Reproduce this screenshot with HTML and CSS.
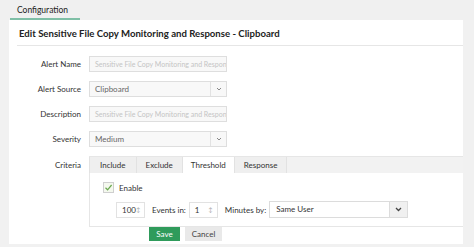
FILE: index.html
```html
<!DOCTYPE html>
<html>
    <head>
        <title>Configuration</title>
        <link rel="stylesheet" href="styles.css">
    </head>
    <body>
        <div class="topTabs">
            <div class="topTab active">Configuration</div>
        </div>

        <div class="card">
            <div class="title">Edit Sensitive File Copy Monitoring and Response - Clipboard</div>

            <div class="form">
                <div class="row">
                    <div class="label">Alert Name</div>
                    <div class="field disabled">Sensitive File Copy Monitoring and Respon</div>
                </div>
                <div class="row">
                    <div class="label">Alert Source</div>
                    <div class="field select">
                        <span class="value">Clipboard</span>
                        <span class="arrow">
                            <svg width="6" height="4" viewBox="0 0 6 4"><path d="M1 1 L3 3 L5 1" fill="none" stroke="#888" stroke-width="1"/></svg>
                        </span>
                    </div>
                </div>
                <div class="row">
                    <div class="label">Description</div>
                    <div class="field disabled">Sensitive File Copy Monitoring and Respon</div>
                </div>
                <div class="row">
                    <div class="label">Severity</div>
                    <div class="field select">
                        <span class="value">Medium</span>
                        <span class="arrow">
                            <svg width="6" height="4" viewBox="0 0 6 4"><path d="M1 1 L3 3 L5 1" fill="none" stroke="#888" stroke-width="1"/></svg>
                        </span>
                    </div>
                </div>
                <div class="row criteria">
                    <div class="label">Criteria</div>
                    <div class="tabArea">
                        <div class="tabs">
                            <div class="tab">Include</div>
                            <div class="tab">Exclude</div>
                            <div class="tab active">Threshold</div>
                            <div class="tab">Response</div>
                        </div>
                        <div class="panel">
                            <div class="enable">
                                <span class="check">
                                    <svg width="9" height="9" viewBox="0 0 9 9"><path d="M1.5 4.8 L3.6 6.8 L7.6 2" fill="none" stroke="#6aa84f" stroke-width="1.2"/></svg>
                                </span>
                                Enable
                            </div>
                            <div class="threshold">
                                <div class="spin"><span>100</span><span class="spinArrows">&#x2195;</span></div>
                                <span class="text">Events in:</span>
                                <div class="spin"><span>1</span><span class="spinArrows">&#x2195;</span></div>
                                <span class="text">Minutes by:</span>
                                <div class="userSelect">
                                    <span class="value">Same User</span>
                                    <span class="arrowBox">
                                        <svg width="7" height="5" viewBox="0 0 7 5"><path d="M1 1 L3.5 3.5 L6 1" fill="none" stroke="#444" stroke-width="1.3"/></svg>
                                    </span>
                                </div>
                            </div>
                        </div>
                    </div>
                </div>
            </div>

            <div class="buttons">
                <div class="btn save">Save</div>
                <div class="btn cancel">Cancel</div>
            </div>
        </div>
    </body>
</html>
```

FILE: styles.css
```css
body {
    margin: 0;
    background-color: #f1f1f1;
    font-family: Lato, "Open Sans", sans-serif;
    font-size: 8px;
    color: #333;
}
.topTabs {
    height: 20px;
    display: flex;
    padding-left: 10px;
    background-color: #f0f0f0;
}
.topTab {
    width: 70px;
    box-sizing: border-box;
    padding: 5px 0 0 7px;
    font-size: 8.5px;
    color: #222;
}
.topTab.active {
    border-bottom: 2px solid #7fbfa6;
}
.card {
    margin: 0 11px 3px 9px;
    background-color: white;
    padding: 0 0 3px 8px;
}
.title {
    font-weight: bold;
    font-size: 9.6px;
    color: #222;
    padding: 8px 0 6px 2px;
    border-bottom: 1px solid #e6e6e6;
}
.form {
    padding-top: 10px;
    margin-left: -8px;
}
.row {
    display: flex;
    align-items: center;
    margin-bottom: 9px;
}
.label {
    width: 72px;
    margin-right: 8px;
    text-align: right;
    color: #333;
}
.field {
    width: 138px;
    height: 16px;
    box-sizing: border-box;
    border: 1px solid #dedede;
    background-color: #f8f8f8;
    padding: 0 5px;
    line-height: 14px;
    white-space: nowrap;
    overflow: hidden;
    color: #666;
}
.field.disabled {
    font-size: 7px;
    color: #c4c4c4;
}
.select {
    display: flex;
    padding: 0 0 0 5px;
}
.select .value {
    flex: 1;
}
.select .arrow {
    width: 15px;
    border-left: 1px solid #e2e2e2;
    display: flex;
    align-items: center;
    justify-content: center;
}
.criteria {
    align-items: flex-start;
    margin-bottom: 0;
}
.criteria .label {
    padding-top: 4px;
}
.tabArea {
    flex: 1;
}
.tabs {
    display: flex;
    height: 17px;
    background-color: #f2f2f2;
    border-top: 1px solid #e6e6e6;
    box-sizing: border-box;
}
.tab {
    padding: 0 9px;
    line-height: 16px;
    border-right: 1px solid #e2e2e2;
    border-left: 1px solid #e2e2e2;
    margin-left: -1px;
    color: #333;
    background-color: #efefef;
}
.tab:first-child {
    margin-left: 0;
    padding: 0 10px;
}
.tab.active {
    background-color: white;
    padding: 0 8px;
}
.panel {
    height: 54px;
    box-sizing: border-box;
    border-left: 1px solid #e6e6e6;
    border-bottom: 1px solid #e6e6e6;
    padding: 9px 0 0 13px;
}
.enable {
    display: flex;
    align-items: center;
    gap: 5px;
}
.check {
    width: 9px;
    height: 9px;
    border: 1px solid #cfcfcf;
    background-color: #f4f8ee;
    display: flex;
}
.threshold {
    display: flex;
    align-items: center;
    margin: 8px 0 0 13px;
}
.spin {
    width: 29px;
    height: 16px;
    box-sizing: border-box;
    border: 1px solid #e2e2e2;
    display: flex;
    align-items: center;
    justify-content: space-between;
    padding: 0 4px 0 5px;
    color: #333;
}
.spinArrows {
    font-size: 6px;
    color: #aaa;
}
.text {
    margin: 0 3px 0 7px;
    color: #333;
}
.userSelect {
    display: flex;
    height: 17px;
    width: 139px;
    box-sizing: border-box;
    border: 1px solid #dcdcdc;
    margin-left: 0;
}
.userSelect .value {
    flex: 1;
    line-height: 15px;
    padding-left: 6px;
    color: #333;
}
.arrowBox {
    width: 17px;
    background-color: #f0f0f0;
    border-left: 1px solid #dcdcdc;
    display: flex;
    align-items: center;
    justify-content: center;
}
.buttons {
    display: flex;
    gap: 5px;
    margin-left: 132px;
}
.btn {
    height: 14px;
    line-height: 14px;
    text-align: center;
}
.save {
    width: 31px;
    background-color: #2f9b5b;
    color: white;
}
.cancel {
    width: 37px;
    background-color: #e9e9e9;
    color: #444;
}
```
